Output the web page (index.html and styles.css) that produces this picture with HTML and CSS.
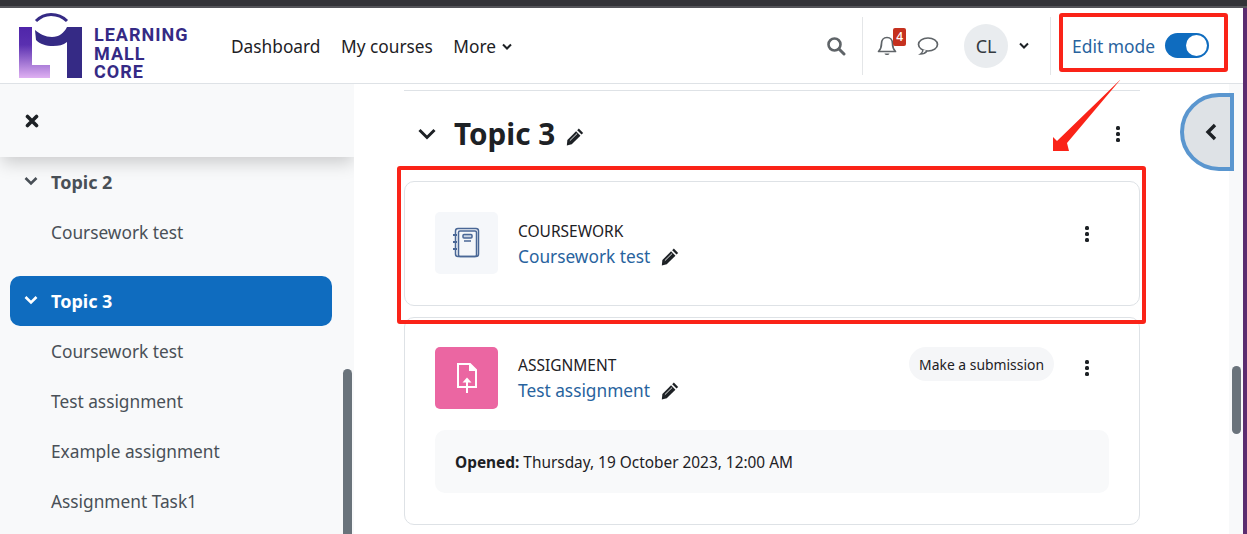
FILE: index.html
```html
<!DOCTYPE html>
<html lang="en">
<head>
<meta charset="utf-8">
<title>Topic 3</title>
<link rel="stylesheet" href="styles.css">
</head>
<body>
<div class="app">
  <div class="topstrip"></div>
  <div class="window">
    <div class="page">
      <header class="navbar">
        <a class="logo">
          <svg class="logo-mark" width="66" height="66" viewBox="0 0 66 66">
            <defs><linearGradient id="lg" x1="0" y1="0" x2="0" y2="1"><stop offset="0" stop-color="#4f25a9"/><stop offset="0.35" stop-color="#5a30b0"/><stop offset="1" stop-color="#dfb0f2"/></linearGradient></defs>
            <path d="M0 14H13V52H31V65H0Z" fill="url(#lg)"/>
            <path d="M16 17C21 21 26 24 33 24C40 24 45 20 48 14H63V65H48V29C44 32 40 33 34 33C27 33 21 31 17 27Z" fill="#352a85"/>
            <path d="M17 8C22 3 27 1.500 32 1.500C38 1.500 43 3 48 8" fill="none" stroke="#352a85" stroke-width="3"/>
          </svg>
          <span class="logo-text"><span>LEARNING</span><span>MALL</span><span>CORE</span></span>
        </a>
        <nav class="nav-links">
          <span>Dashboard</span>
          <span>My courses</span>
          <span class="more">More <svg width="10" height="8" viewBox="0 0 10 8"><path d="M1 1.500L5 5.500L9 1.500" fill="none" stroke="#1d2125" stroke-width="2"/></svg></span>
        </nav>
        <div class="nav-right">
          <svg class="search" width="20" height="20" viewBox="0 0 20 20"><circle cx="8.500" cy="8.500" r="6" fill="none" stroke="#5f6468" stroke-width="2.600"/><path d="M13 13L18 18" stroke="#5f6468" stroke-width="3" stroke-linecap="round"/></svg>
          <div class="divider"></div>
          <div class="bell">
            <svg width="22" height="22" viewBox="0 0 22 22"><path d="M11 2.500C7.500 2.500 5.500 5 5.500 8.500C5.500 13 4.500 14.500 2.500 16.500H19.500C17.500 14.500 16.500 13 16.500 8.500C16.500 5 14.500 2.500 11 2.500Z" fill="none" stroke="#5f6468" stroke-width="1.700" stroke-linejoin="round"/><path d="M8.500 18.500C9 20.500 13 20.500 13.500 18.500Z" fill="#5f6468"/></svg>
            <span class="badge">4</span>
          </div>
          <svg class="chat" width="22" height="20" viewBox="0 0 22 20"><ellipse cx="11" cy="8.500" rx="9.500" ry="6.500" fill="none" stroke="#5f6468" stroke-width="1.700"/><path d="M6 13.500C6 15.500 5 17 3.500 18C6.500 18 8.500 17 10 15" fill="#fff" stroke="#5f6468" stroke-width="1.500"/></svg>
          <div class="avatar">CL</div>
          <svg class="caret" width="10" height="8" viewBox="0 0 10 8"><path d="M1 1.500L5 5.500L9 1.500" fill="none" stroke="#1d2125" stroke-width="2"/></svg>
          <div class="divider second"></div>
          <div class="edit">
            <span>Edit mode</span>
            <span class="toggle"><span class="knob"></span></span>
          </div>
        </div>
      </header>
      <div class="body-row">
        <aside class="drawer">
          <div class="drawer-head">
            <svg width="14" height="14" viewBox="0 0 14 14"><path d="M2.500 2.500L11.500 11.500M11.500 2.500L2.500 11.500" stroke="#1d2125" stroke-width="3.600" stroke-linecap="round"/></svg>
          </div>
          <ul class="course-index">
            <li class="ci-section"><svg width="14" height="10" viewBox="0 0 14 10"><path d="M1.500 2L7 7.500L12.500 2" fill="none" stroke="#495057" stroke-width="2.600"/></svg>Topic 2</li>
            <li class="ci-item">Coursework test</li>
            <li class="ci-section active"><svg width="14" height="10" viewBox="0 0 14 10"><path d="M1.500 2L7 7.500L12.500 2" fill="none" stroke="#fff" stroke-width="2.600"/></svg>Topic 3</li>
            <li class="ci-item">Coursework test</li>
            <li class="ci-item">Test assignment</li>
            <li class="ci-item">Example assignment</li>
            <li class="ci-item">Assignment Task1</li>
          </ul>
          <div class="drawer-scroll"></div>
        </aside>
        <main class="main">
          <div class="section-rule"></div>
          <div class="section-head">
            <svg class="sec-chev" width="20" height="14" viewBox="0 0 20 14"><path d="M2.500 3L10 10.500L17.500 3" fill="none" stroke="#1d2125" stroke-width="3"/></svg>
            <h2>Topic 3</h2>
            <svg class="pencil" width="18" height="18" viewBox="1 1 16 16.500"><use href="#pen"/></svg>
            <span class="dots head-dots"><i></i><i></i><i></i></span>
          </div>
          <article class="card first">
            <div class="card-row">
              <div class="icon-tile pale">
                <svg class="book" width="28" height="32" viewBox="0 0 28 32" fill="none" stroke="#4a6796" stroke-width="1.500"><rect x="3.500" y="1.500" width="23" height="28" rx="2.500"/><rect x="6.500" y="4" width="18" height="25.500" rx="1.500"/><rect x="11" y="7.500" width="9" height="3.500" rx="1" fill="#c9d3e3"/><path d="M12 14H19"/><path d="M1 8H5M1 15H5M1 22H5" stroke-width="2"/></svg>
              </div>
              <div class="card-text">
                <span class="kind">COURSEWORK</span>
                <span class="title"><a>Coursework test</a><svg class="pencil" width="18" height="18" viewBox="1 1 16 16.500"><use href="#pen"/></svg></span>
              </div>
              <span class="dots"><i></i><i></i><i></i></span>
            </div>
          </article>
          <article class="card second-card">
            <div class="card-row">
              <div class="icon-tile pink">
                <svg width="24" height="32" viewBox="0 0 24 32" fill="none" stroke="#fff" stroke-width="2"><path d="M3 2H15L21 8V25H3Z"/><path d="M15 2V8H21" fill="#fff"/><path d="M12 31V17"/><path d="M7.500 20.500L12 15.500L16.500 20.500Z" fill="#fff" stroke="none"/></svg>
              </div>
              <div class="card-text">
                <span class="kind">ASSIGNMENT</span>
                <span class="title"><a>Test assignment</a><svg class="pencil" width="18" height="18" viewBox="1 1 16 16.500"><use href="#pen"/></svg></span>
              </div>
              <span class="pill">Make a submission</span>
              <span class="dots narrow"><i></i><i></i><i></i></span>
            </div>
            <div class="dates"><b>Opened:</b> Thursday, 19 October 2023, 12:00 AM</div>
          </article>
        </main>
        <div class="page-scroll"><div class="page-thumb"></div></div>
      </div>
      <button class="index-toggle" type="button"><svg width="12" height="18" viewBox="0 0 12 18"><path d="M10 2L3 9L10 16" fill="none" stroke="#1d2125" stroke-width="3.400"/></svg></button>
    </div>
    <div class="edge"></div>
  </div>
  <div class="mark edit-mark"></div>
  <div class="mark card-mark"></div>
  <svg class="arrow" width="80" height="80" viewBox="0 0 80 80"><path d="M75 -1L21 63L23 71H7L7 57L11 61Z" fill="#fa2318"/></svg>
</div>
<svg class="defs" width="0" height="0"><defs><g id="pen"><path d="M12.500 1.500L16.500 5.500L15 7L11 3Z" fill="#1d2125"/><path d="M10 4L14 8L6 16L1.500 17L2 12Z" fill="#1d2125"/><path d="M4.300 12.600L11 6" stroke="#fff" stroke-width=".8"/></g></defs></svg>
</body>
</html>
```
FILE: styles.css
```css
* { box-sizing: border-box; }
html, body { margin: 0; padding: 0; height: 100%; overflow: hidden; background: #fff; }
body { font-family: "Noto Sans", "Open Sans", sans-serif; color: #1d2125; font-size: 17.300px; }
.app { position: relative; width: 1247px; height: 534px; overflow: hidden; display: flex; flex-direction: column; }
.topstrip { height: 8px; flex: none; background: #333338; border-bottom: 2px solid #55555a; }
.window { flex: 1; display: flex; min-height: 0; }
.page { flex: 1; position: relative; display: flex; flex-direction: column; min-width: 0; }
.edge { width: 4px; background: #5b2c6f; flex: none; }

.navbar { height: 76px; flex: none; display: flex; align-items: center; background: #fff; border-bottom: 1px solid #dee2e6; padding: 0 0 0 19px; }
.logo { display: flex; align-items: flex-start; height: 66px; margin-top: 1px; width: 212px; flex: none; }
.logo-text { display: flex; flex-direction: column; font-family: "Roboto", sans-serif; font-weight: 700; font-size: 18px; line-height: 18.700px; letter-spacing: 1px; color: #352a85; margin: 13px 0 0 9px; }
.nav-links { display: flex; gap: 20.500px; font-size: 17.300px; padding-top: 2px; }
.more svg { margin-left: 1px; vertical-align: 2px; }
.nav-right { margin-left: auto; display: flex; align-items: center; height: 58px; }
.search { margin-right: 16px; }
.divider { width: 1px; height: 58px; background: #e4e6e8; }
.bell { position: relative; margin-left: 13px; display: flex; }
.badge { position: absolute; left: 17px; top: -7px; width: 13px; height: 18px; border-radius: 2px; background: #c5311f; color: #fff; font-size: 12px; line-height: 18px; text-align: center; font-weight: 500; }
.chat { margin-left: 19px; }
.avatar { width: 44px; height: 44px; border-radius: 50%; background: #e9ecef; display: flex; align-items: center; justify-content: center; margin-left: 25px; font-size: 18px; color: #343a40; }
.caret { margin-left: 11px; }
.divider.second { margin-left: 21px; }
.edit { display: flex; align-items: center; color: #28639e; padding: 0 34px 0 21px; font-size: 17.400px; }
.toggle { width: 44px; height: 25px; margin-left: 10px; border-radius: 13px; background: #0f6cbf; display: flex; align-items: center; justify-content: flex-end; padding-right: 2px; }
.knob { width: 21px; height: 21px; background: #fff; border-radius: 50%; }

.body-row { flex: 1; display: flex; min-height: 0; }
.drawer { width: 354px; flex: none; background: #f8f9fa; position: relative; overflow: hidden; }
.drawer-head { height: 73px; position: relative; z-index: 1; background: #f8f9fa; box-shadow: 0 8px 16px -2px rgba(0,0,0,.18); display: flex; align-items: center; padding-left: 25px; margin-right: -1px; }
.course-index { list-style: none; margin: 0; padding: 0 22px 0 10px; }
.ci-section { height: 50px; display: flex; align-items: center; font-weight: 700; color: #495057; border-radius: 10px; padding-left: 14px; gap: 13px; font-size: 18px; }
.ci-section svg { margin-top: -2px; }
.ci-section.active { background: #0f6cbf; color: #fff; margin-top: 19px; }
.ci-item { height: 50px; display: flex; align-items: center; padding: 0 0 0 41px; color: #495057; }
.drawer-scroll { position: absolute; left: 343px; top: 285px; width: 9px; bottom: -20px; border-radius: 5px; background: #6a737b; }

.main { flex: 1; padding: 6px 89px 0 50px; min-width: 0; overflow: hidden; background: #fff; }
.section-rule { height: 1px; background: #dee2e6; }
.section-head { height: 90px; display: flex; align-items: center; padding-bottom: 4px; padding-left: 13px; }
.section-head h2 { margin: 0 0 0 17px; font-size: 29.700px; font-weight: 700; line-height: 40px; }
.section-head .pencil { margin-left: 11px; margin-top: 6px; }
.card { border: 1px solid #dee2e6; border-radius: 10px; padding: 30px 30px 0; background: #fff; }
.first { height: 125px; margin-bottom: 11px; }
.first .card-text { padding-top: 9px; }
.second-card { height: 208px; padding-top: 29px; }
.card-row { display: flex; align-items: flex-start; }
.icon-tile { width: 63px; height: 62px; border-radius: 5px; display: flex; align-items: center; justify-content: center; flex: none; }
.book { margin-right: 1px; }
.pale { background: #f5f7fa; }
.pink { background: #eb66a2; }
.card-text { margin-left: 20px; display: flex; flex-direction: column; padding-top: 8px; }
.kind { font-size: 15.500px; line-height: 20px; color: #1d2125; }
.title { font-size: 17.300px; line-height: 32px; color: #28639e; display: flex; align-items: center; }
.title .pencil { margin-left: 11px; }
.dots { display: flex; flex-direction: column; align-items: center; justify-content: center; gap: 2px; width: 44px; height: 44px; margin-left: auto; flex: none; }
.dots.narrow { margin-left: 11px; margin-top: -1px; }
.dots i { width: 4px; height: 4px; border-radius: 1.500px; background: #1d2125; display: block; }
.pill { margin-left: auto; background: #f5f6f8; border-radius: 17px; height: 34px; line-height: 35px; padding: 0 10px; font-size: 13.900px; }
.dates { margin-top: 21px; height: 63px; border-radius: 10px; background: #f8f9fa; display: flex; align-items: center; padding: 2px 0 0 20px; font-size: 15.400px; gap: 4px; }

.page-scroll { width: 14px; flex: none; background: #f8f9fa; position: relative; }
.page-thumb { position: absolute; left: 3px; top: 282px; width: 9px; height: 68px; border-radius: 5px; background: #6a737b; }
.index-toggle { position: absolute; left: 1180px; top: 85px; width: 54px; height: 78px; padding: 0 0 0 21px; background: #dee2e6; border: 4px solid #5a96cf; border-radius: 39px 0 0 39px; display: flex; align-items: center; justify-content: flex-start; }

.mark { position: absolute; border: 4px solid #fa2318; border-radius: 3px; pointer-events: none; }
.edit-mark { left: 1059px; top: 13px; width: 169px; height: 59px; }
.card-mark { left: 397px; top: 166px; width: 749px; height: 158px; }
.arrow { position: absolute; left: 1046px; top: 80px; }
.defs { position: absolute; }
```
